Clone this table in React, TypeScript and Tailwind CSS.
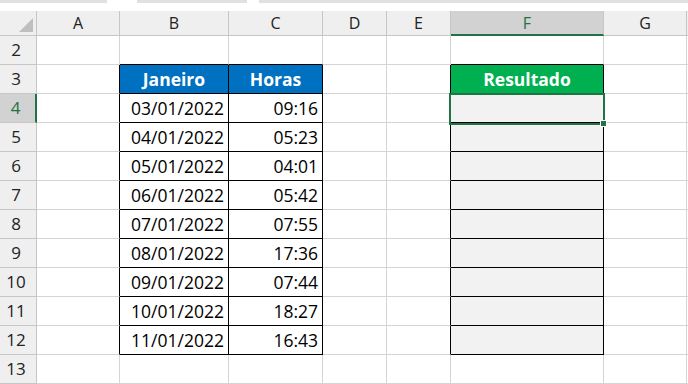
import React from 'react';

const cols = ['A', 'B', 'C', 'D', 'E', 'F', 'G'];

const dates = [
  '03/01/2022',
  '04/01/2022',
  '05/01/2022',
  '06/01/2022',
  '07/01/2022',
  '08/01/2022',
  '09/01/2022',
  '10/01/2022',
  '11/01/2022',
];

const hours = ['09:16', '05:23', '04:01', '05:42', '07:55', '17:36', '07:44', '18:27', '16:43'];

const rows = [2, 3, 4, 5, 6, 7, 8, 9, 10, 11, 12, 13];

// which cells sit inside a bordered table (B3:C12, F3:F12)
const inTable = (col: string, row: number) =>
  row >= 3 && row <= 12 && (col === 'B' || col === 'C' || col === 'F');

const Cell = ({ col, row }: { col: string; row: number }) => {
  const right = col === 'G' ? 'G' : cols[cols.indexOf(col) + 1];
  const rightBlack = inTable(col, row) || (right !== col && inTable(right, row));
  const bottomBlack = inTable(col, row) || inTable(col, row + 1);

  let bg = 'bg-white';
  let content: React.ReactNode = null;
  let align = 'justify-end';

  if (row === 3 && (col === 'B' || col === 'C')) {
    bg = 'bg-[#0070c0]';
    align = 'justify-center';
    content = (
      <span className="font-bold text-white">{col === 'B' ? 'Janeiro' : 'Horas'}</span>
    );
  } else if (row === 3 && col === 'F') {
    bg = 'bg-[#00b050]';
    align = 'justify-center';
    content = <span className="font-bold text-white">Resultado</span>;
  } else if (row >= 4 && row <= 12) {
    if (col === 'B') content = dates[row - 4];
    if (col === 'C') content = hours[row - 4];
    if (col === 'F') bg = 'bg-[#f2f2f2]';
  }

  return (
    <div
      className={`relative flex h-[29px] items-center px-[4px] text-[17.5px] text-black border-r border-b ${align} ${bg} ${
        rightBlack ? 'border-r-black' : 'border-r-[#d4d4d4]'
      } ${bottomBlack ? 'border-b-black' : 'border-b-[#d4d4d4]'}`}
    >
      {content}
      {col === 'F' && row === 4 && (
        <div className="absolute -left-[2px] -top-[1px] z-10 h-[32px] w-[156px] border-2 border-[#217346]">
          <div className="absolute -bottom-[4px] -right-[4px] h-[7px] w-[7px] border border-white bg-[#217346]" />
        </div>
      )}
    </div>
  );
};

export default function App() {
  return (
    <div
      className="h-[384px] w-[688px] overflow-hidden bg-white"
      style={{ fontFamily: '"Open Sans", "Liberation Sans", sans-serif' }}
    >
      {/* bottom edge of the formula bar */}
      <div className="flex h-[11px] items-start">
        <div className="h-[3px] w-[107px] bg-[#e1e1e1]" />
        <div className="ml-[30px] h-[3px] w-[110px] bg-[#e1e1e1]" />
        <div className="ml-[12px] h-[3px] flex-1 bg-[#e1e1e1]" />
      </div>

      <div className="grid grid-cols-[37px_83px_109px_94px_64px_64px_153px_83px_1fr]">
        {/* corner */}
        <div className="relative h-[25px] border-r border-b border-[#c6c6c6] bg-[#efefef]">
          <div className="absolute bottom-[3px] right-[3px] h-0 w-0 border-b-[14px] border-l-[14px] border-b-[#bfbfbf] border-l-transparent" />
        </div>
        {cols.map((c) =>
          c === 'F' ? (
            <div
              key={c}
              className="flex h-[25px] items-center justify-center border-r border-r-[#c6c6c6] border-b-2 border-b-[#217346] bg-[#d2d2d2] pt-[1px] text-[16px] text-[#217346]"
            >
              {c}
            </div>
          ) : (
            <div
              key={c}
              className="flex h-[25px] items-center justify-center border-r border-b border-[#c6c6c6] bg-[#efefef] text-[16px] text-[#222]"
            >
              {c}
            </div>
          )
        )}
        <div className="h-[25px] border-b border-[#c6c6c6] bg-[#efefef]" />

        {rows.map((r) => (
          <React.Fragment key={r}>
            {r === 4 ? (
              <div className="flex h-[29px] items-center justify-center border-r-2 border-r-[#217346] border-b border-b-[#c6c6c6] bg-[#d2d2d2] pr-[4px] text-[17px] text-[#217346]">
                {r}
              </div>
            ) : (
              <div className="flex h-[29px] items-center justify-center border-r border-b border-[#c6c6c6] bg-[#efefef] pr-[4px] text-[17px] text-[#222]">
                {r}
              </div>
            )}
            {cols.map((c) => (
              <Cell key={c} col={c} row={r} />
            ))}
            <div className="h-[29px] border-b border-[#d4d4d4] bg-white" />
          </React.Fragment>
        ))}
      </div>
    </div>
  );
}
